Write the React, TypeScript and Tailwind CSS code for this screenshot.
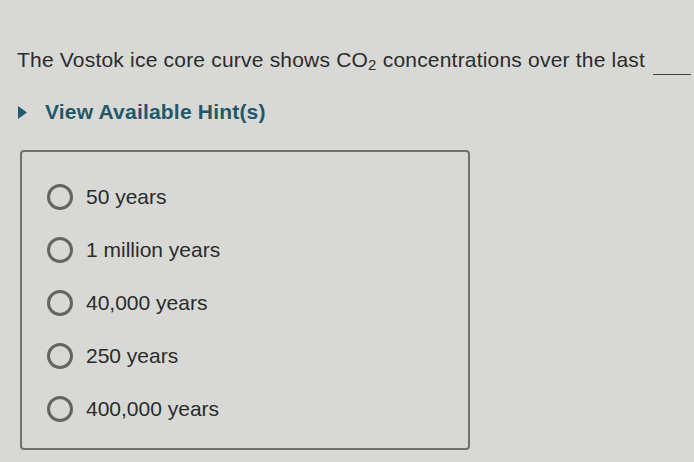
import { useState } from "react";

const options = ["50 years", "1 million years", "40,000 years", "250 years", "400,000 years"];

export default function App() {
  const [picked, setPicked] = useState<number | null>(null);

  return (
    <div
      className="w-[694px] h-[462px] overflow-hidden bg-[#d8d8d5] text-[#2b2b2b]"
      style={{ fontFamily: "'Liberation Sans', Arial, sans-serif" }}
    >
      {/* Question */}
      <div className="pt-[48px] pl-[17px] flex items-end text-[21px] leading-[24px] tracking-[0.2px] whitespace-nowrap">
        <span className="shrink-0">
          The Vostok ice core curve shows CO<sub className="text-[15px] relative top-[3px]">2</sub> concentrations over
          the last
        </span>
        <span className="shrink-0 ml-[8px] mb-[-3px] w-[38px] border-b border-[#444]" />
      </div>

      {/* Hint toggle */}
      <button className="mt-[28px] ml-[18px] h-[24px] flex items-center gap-[18px] text-[21px] font-bold text-[#22586a] tracking-[0.2px]">
        <svg width="9" height="13" viewBox="0 0 9 13">
          <path d="M0 0 L9 6.5 L0 13 Z" fill="#1d5c6e" />
        </svg>
        View Available Hint(s)
      </button>

      {/* Answer choices */}
      <div className="mt-[26px] ml-[20px] w-[450px] h-[300px] border-2 border-[#707070] rounded-[4px] pt-[33px] pl-[25px] flex flex-col gap-[29px]">
        {options.map((o, i) => (
          <label
            key={o}
            className="flex items-center gap-[13px] h-[24px] text-[21px] cursor-pointer"
            onClick={() => setPicked(i)}
          >
            <span className="w-[26px] h-[26px] shrink-0 rounded-full border-[3px] border-[#646464] flex items-center justify-center">
              {picked === i && <span className="w-[12px] h-[12px] rounded-full bg-[#2b6cb0]" />}
            </span>
            {o}
          </label>
        ))}
      </div>
    </div>
  );
}
